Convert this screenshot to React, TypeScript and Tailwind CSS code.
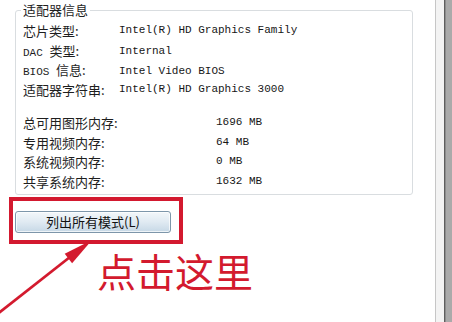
import React from 'react';

const adapterRows: { label: React.ReactNode; value: string }[] = [
  { label: <>芯片类型:</>, value: 'Intel(R) HD Graphics Family' },
  { label: <><span className="font-['Liberation_Mono',monospace] text-[11px]">DAC </span>类型:</>, value: 'Internal' },
  { label: <><span className="font-['Liberation_Mono',monospace] text-[11px]">BIOS </span>信息:</>, value: 'Intel Video BIOS' },
  { label: <>适配器字符串:</>, value: 'Intel(R) HD Graphics 3000' },
];

const memoryRows = [
  { label: '总可用图形内存:', value: '1696 MB' },
  { label: '专用视频内存:', value: '64 MB' },
  { label: '系统视频内存:', value: '0 MB' },
  { label: '共享系统内存:', value: '1632 MB' },
];

function InfoRow({ label, value, cols }: { label: React.ReactNode; value: string; cols: string }) {
  return (
    <div className={`grid ${cols} h-[19.5px] items-center`}>
      <span className="text-[13px] leading-[19.5px] text-[#1e1e1e]">{label}</span>
      <span className="font-['Liberation_Mono','Noto_Sans_CJK_SC',monospace] text-[11px] leading-[19.5px] text-[#161616] whitespace-pre">
        {value}
      </span>
    </div>
  );
}

export default function App() {
  return (
    <div className="relative flex w-[452px] h-[322px] overflow-hidden bg-white font-['Noto_Sans_CJK_SC','Noto_Sans',sans-serif]">
      {/* Main panel */}
      <div className="w-[435px] flex flex-col">
        <fieldset className="ml-[15px] w-[398px] border border-[#d9dde0] rounded-[3px] pl-[5px] pr-[5px] pb-[3px]">
          <legend className="px-[2px] text-[13px] leading-[20px] text-[#1e1e1e]">适配器信息</legend>

          <div className="pl-[2px] pt-[1px]">
            {adapterRows.map((r, i) => (
              <InfoRow key={i} label={r.label} value={r.value} cols="grid-cols-[96px_1fr]" />
            ))}
          </div>

          <div className="pl-[2px] mt-[14px]">
            {memoryRows.map((r, i) => (
              <InfoRow key={i} label={r.label} value={r.value} cols="grid-cols-[193px_1fr]" />
            ))}
          </div>
        </fieldset>

        {/* Highlighted button */}
        <div className="mt-[2px] ml-[9px] w-fit border-[4px] border-[#d3192f] pl-[2px] pr-[8px] py-[7px]">
          <button className="w-[156px] h-[22px] rounded-[3px] border border-[#7d96aa] bg-linear-to-b from-[#f3f7fa] via-[#e0eaf2] to-[#c6d8e6] text-[13px] leading-[20px] text-[#111] shadow-[inset_0_0_0_1px_rgba(255,255,255,0.7)]">
            列出所有模式(L)
          </button>
        </div>

        <div className="mt-[7px] ml-[97px] text-[39px] leading-[39px] text-[#d31a2e]">点击这里</div>
      </div>

      {/* Right window edge */}
      <div className="w-[1px] bg-[#c6c6c6]" />
      <div className="w-[8px] bg-[#f3f3f3]" />
      <div className="w-[1px] bg-[#5e5e5e]" />
      <div className="w-[1px] bg-[#8c8c8c]" />
      <div className="flex-1 bg-[#aaaaaa]" />

      {/* Annotation arrow */}
      <svg className="absolute left-0 top-[230px]" width="100" height="92" viewBox="0 0 100 92">
        <line x1="-2" y1="83.6" x2="70" y2="27" stroke="#d31a2e" strokeWidth="2.8" />
        <polygon points="92,10 64.7,23.8 72.1,33.2" fill="#d31a2e" />
      </svg>
    </div>
  );
}
